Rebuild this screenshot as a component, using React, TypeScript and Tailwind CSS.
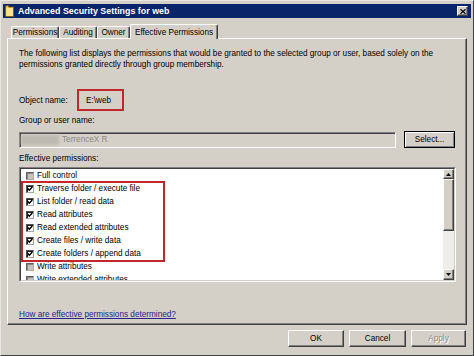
import React from "react";

const raised =
  "border border-t-white border-l-white border-r-[#404040] border-b-[#404040] shadow-[inset_-1px_-1px_0_#808080]";

function CheckBox({ state }: { state: "checked" | "gray" }) {
  if (state === "gray") {
    return (
      <span className="w-[8px] h-[8px] shrink-0 border border-t-[#606060] border-l-[#606060] border-r-[#b0ada8] border-b-[#b0ada8] bg-[#c6c3bd] shadow-[inset_1px_1px_0_#8a8782]" />
    );
  }
  return (
    <span className="w-[8px] h-[8px] shrink-0 border border-t-[#505050] border-l-[#505050] border-r-[#a8a5a0] border-b-[#a8a5a0] bg-white shadow-[inset_1px_1px_0_#202020] flex items-center justify-center">
      <svg width="6" height="6" viewBox="0 0 6 6">
        <path d="M0.8 2.6 L2.3 4.2 L5.3 1.0" stroke="#000" strokeWidth="1.5" fill="none" />
      </svg>
    </span>
  );
}

function Row({ label, state }: { label: string; state: "checked" | "gray" }) {
  return (
    <div className="h-[13px] flex items-center pl-[5px] gap-[3px] whitespace-nowrap">
      <CheckBox state={state} />
      <span>{label}</span>
    </div>
  );
}

function ScrollBtn({ up }: { up: boolean }) {
  return (
    <div className={`w-[11px] shrink-0 bg-[#d4d0c8] flex items-center justify-center ${up ? "h-[10px]" : "h-[11px]"} ${raised}`}>
      <svg width="5" height="3" viewBox="0 0 5 3">
        {up ? <path d="M2.5 0 L5 3 L0 3 Z" fill="#000" /> : <path d="M0 0 L5 0 L2.5 3 Z" fill="#000" />}
      </svg>
    </div>
  );
}

export default function App() {
  const checked = [
    "Traverse folder / execute file",
    "List folder / read data",
    "Read attributes",
    "Read extended attributes",
    "Create files / write data",
    "Create folders / append data",
  ];
  return (
    <div className="w-[474px] h-[356px] overflow-hidden bg-[#d4d0c8] font-['Liberation_Sans',Arial,sans-serif] text-[8.2px] leading-[11px] text-black">
      <div className="h-full flex flex-col border border-t-[#e8e6e0] border-l-[#e8e6e0] border-r-[#404040] border-b-[#404040] px-[2px] pt-[3px]">
        {/* Title bar */}
        <div className="h-[14px] shrink-0 bg-[#0a246a] flex items-center pl-[2px] pr-[3px]">
          <svg width="9" height="12" viewBox="0 0 9 12" className="shrink-0">
            <path d="M0.5 1 L3.5 0.5 L3.5 2 L8.5 2 L8.5 11.5 L0.5 11.5 Z" fill="#f2cf5a" stroke="#7a5a10" strokeWidth="0.8" />
            <path d="M1.5 3 L8 3 L8 11 L1.5 11 Z" fill="#fbe38c" />
          </svg>
          <span className="ml-[4px] text-white font-bold text-[8.9px] leading-[14px] whitespace-nowrap">
            Advanced Security Settings for web
          </span>
          <div className={`ml-auto w-[11px] h-[10px] bg-[#d4d0c8] flex items-center justify-center ${raised}`}>
            <svg width="6" height="5" viewBox="0 0 6 5">
              <path d="M0.5 0.3 L5.5 4.7 M5.5 0.3 L0.5 4.7" stroke="#000" strokeWidth="1.3" />
            </svg>
          </div>
        </div>

        <div className="px-[4px] flex flex-col">
          {/* Tabs */}
          <div className="mt-[6px] h-[15px] -mb-[1px] flex items-end pl-[4px] relative z-10">
            {[
              ["Permissions", "w-[48px]"],
              ["Auditing", "w-[38px]"],
              ["Owner", "w-[33px]"],
            ].map(([t, w]) => (
              <div
                key={t}
                className={`${w} h-[12px] mb-[1px] flex items-center justify-center border-t border-l border-t-white border-l-white border-r border-r-[#404040] shadow-[inset_-1px_0_0_#808080] rounded-t-[2px] whitespace-nowrap`}
              >
                {t}
              </div>
            ))}
            <div className="w-[88px] h-[15px] bg-[#d4d0c8] flex items-center justify-center border-t border-l border-t-white border-l-white border-r border-r-[#404040] shadow-[inset_-1px_0_0_#808080] rounded-t-[2px] whitespace-nowrap">
              Effective Permissions
            </div>
          </div>

          {/* Panel */}
          <div className={`h-[287px] ${raised} px-[11px] pt-[9px] flex flex-col`}>
            <p className="whitespace-nowrap">
              The following list displays the permissions that would be granted to the selected group or user, based solely on the
              <br />
              permissions granted directly through group membership.
            </p>

            <div className="mt-[19px] h-[22px] flex items-center">
              <span className="w-[58px]">Object name:</span>
              <span className="h-[22px] w-[47px] border-2 border-[#c4262e] flex items-center pl-[7px]">E:\web</span>
            </div>

            <div className="mt-[4px]">Group or user name:</div>

            <div className="mt-[5px] flex items-center gap-[8px]">
              <div className="w-[378px] h-[16px] border border-t-[#808080] border-l-[#808080] border-r-white border-b-white shadow-[inset_1px_1px_0_#404040] flex items-center pl-[1px]">
                <span className="w-[38px] h-[10px] bg-[#bdb9b1] blur-[1.5px]" />
                <span className="ml-[3px] text-[#8a8882]">TerrenceX R</span>
              </div>
              <button className="w-[51px] h-[17px] border border-black bg-[#d4d0c8] shadow-[inset_1px_1px_0_#fff,inset_-1px_-1px_0_#808080] flex items-center justify-center">
                Select...
              </button>
            </div>

            <div className="mt-[5px]">Effective permissions:</div>

            <div className="mt-[3px] h-[115px] w-[437px] border border-t-[#808080] border-l-[#808080] border-r-white border-b-white">
              <div className="h-full border border-t-[#404040] border-l-[#404040] border-r-[#d4d0c8] border-b-[#d4d0c8] bg-white flex">
                <div className="flex-1 overflow-hidden">
                  <Row label="Full control" state="gray" />
                  <div className="relative">
                    {checked.map((c) => (
                      <Row key={c} label={c} state="checked" />
                    ))}
                    <span className="absolute left-0 -top-[1px] -bottom-[2px] w-[144px] border-2 border-[#c4262e] pointer-events-none" />
                  </div>
                  <Row label="Write attributes" state="gray" />
                  <Row label="Write extended attributes" state="gray" />
                </div>
                <div className="w-[11px] flex flex-col">
                  <ScrollBtn up />
                  <div className={`h-[52px] shrink-0 bg-[#d4d0c8] ${raised}`} />
                  <div className="flex-1 bg-[#eeede9]" />
                  <ScrollBtn up={false} />
                </div>
              </div>
            </div>

            <a className="mt-[27px] self-start text-[#23238e] underline whitespace-nowrap">
              How are effective permissions determined?
            </a>
          </div>

          {/* Buttons */}
          <div className="mt-[5px] flex justify-end gap-[5px] pr-[1px]">
            <button className={`w-[56px] h-[17px] bg-[#d4d0c8] flex items-center justify-center ${raised}`}>OK</button>
            <button className={`w-[57px] h-[17px] bg-[#d4d0c8] flex items-center justify-center ${raised}`}>Cancel</button>
            <button className={`w-[55px] h-[17px] bg-[#d4d0c8] flex items-center justify-center text-[#8c8a85] [text-shadow:1px_1px_0_#fff] ${raised}`}>
              Apply
            </button>
          </div>
        </div>
      </div>
    </div>
  );
}
